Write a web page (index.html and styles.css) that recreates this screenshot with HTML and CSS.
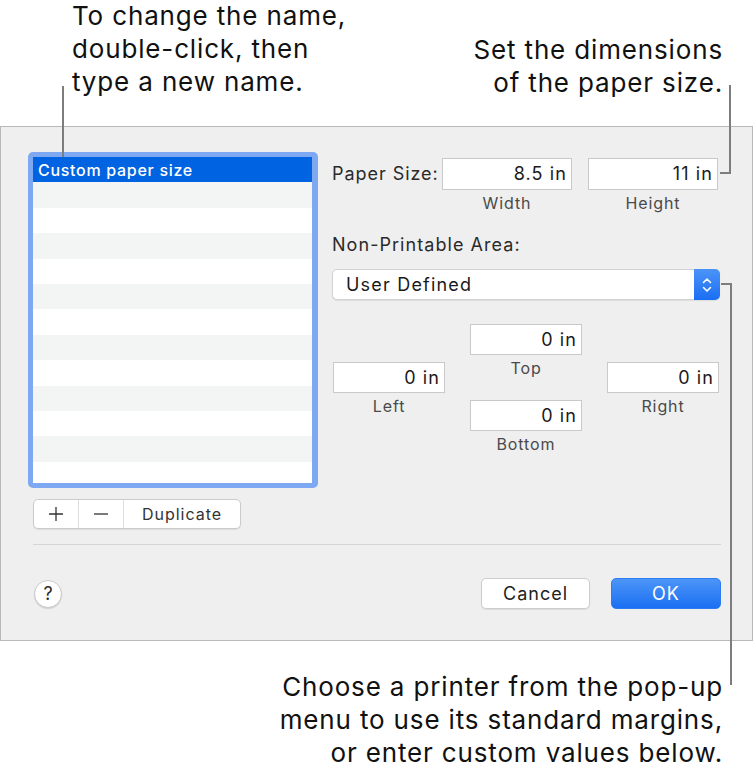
FILE: index.html
```html
<!DOCTYPE html>
<html lang="en">
<head>
    <meta charset="UTF-8">
    <title>Page Setup - Custom Paper Size</title>
    <link rel="stylesheet" href="styles.css">
</head>
<body>
<div class="page">

    <!-- top annotations -->
    <div class="notes-top">
        <p class="note note-left">To change the name,<br>double-click, then<br>type a new name.</p>
        <p class="note note-right">Set the dimensions<br>of the paper size.</p>
    </div>

    <div class="dialog">
        <div class="dialog-body">
            <!-- paper size list -->
            <div class="list-col">
                <div class="list-ring">
                    <div class="size-list">
                        <div class="row selected">Custom paper size</div>
                        <div class="row"></div>
                        <div class="row"></div>
                        <div class="row"></div>
                        <div class="row"></div>
                        <div class="row"></div>
                        <div class="row"></div>
                        <div class="row"></div>
                        <div class="row"></div>
                        <div class="row"></div>
                        <div class="row"></div>
                        <div class="row"></div>
                        <div class="row"></div>
                    </div>
                </div>
                <div class="seg">
                    <span class="seg-btn seg-icon">
                        <svg width="18" height="18" viewBox="0 0 18 18"><path d="M9 2v14M2 9h14" stroke="#333" stroke-width="1.3" fill="none"/></svg>
                    </span>
                    <span class="seg-btn seg-icon">
                        <svg width="18" height="18" viewBox="0 0 18 18"><path d="M2 9h14" stroke="#333" stroke-width="1.3" fill="none"/></svg>
                    </span>
                    <span class="seg-btn seg-text">Duplicate</span>
                </div>
            </div>

            <!-- settings -->
            <div class="settings-col">
                <div class="paper-row">
                    <span class="label">Paper Size:</span>
                    <div class="field-group wide">
                        <div class="field">8.5 in</div>
                        <div class="caption">Width</div>
                    </div>
                    <div class="field-group wide">
                        <div class="field">11 in</div>
                        <div class="caption">Height</div>
                    </div>
                </div>

                <div class="label npa-label">Non-Printable Area:</div>

                <div class="popup">
                    <span class="popup-text">User Defined</span>
                    <span class="popup-arrows">
                        <svg width="12" height="18" viewBox="0 0 12 18"><path d="M2.5 6.5L6 3l3.5 3.5M2.5 11.5L6 15l3.5-3.5" stroke="#fff" stroke-width="1.6" fill="none" stroke-linecap="round" stroke-linejoin="round"/></svg>
                    </span>
                </div>

                <div class="margins">
                    <div class="field-group m-top">
                        <div class="field">0 in</div>
                        <div class="caption">Top</div>
                    </div>
                    <div class="field-group m-left">
                        <div class="field">0 in</div>
                        <div class="caption">Left</div>
                    </div>
                    <div class="field-group m-right">
                        <div class="field">0 in</div>
                        <div class="caption">Right</div>
                    </div>
                    <div class="field-group m-bottom">
                        <div class="field">0 in</div>
                        <div class="caption">Bottom</div>
                    </div>
                </div>
            </div>
        </div>

        <div class="sep"></div>

        <div class="dialog-footer">
            <span class="help">?</span>
            <span class="btn cancel">Cancel</span>
            <span class="btn ok">OK</span>
        </div>
    </div>

    <p class="note note-bottom">Choose a printer from the pop-up<br>menu to use its standard margins,<br>or enter custom values below.</p>

    <!-- leader lines -->
    <div class="leader lead-name"></div>
    <div class="leader lead-size-v"></div>
    <div class="leader lead-size-h"></div>
    <div class="leader lead-popup-h"></div>
    <div class="leader lead-popup-v"></div>
</div>
</body>
</html>
```

FILE: styles.css
```css
body {
    margin: 0;
    background: #fff;
    font-family: Inter, Roboto, "Liberation Sans", sans-serif;
    color: #1d1d1d;
}

.page {
    position: relative;
    width: 753px;
    height: 774px;
    overflow: hidden;
}

/* annotations */
.notes-top {
    display: flex;
    justify-content: space-between;
    height: 126px;
}

.note {
    margin: 0;
    font-size: 26px;
    line-height: 33px;
    letter-spacing: 0.85px;
    color: #111;
}

.note-left {
    margin-left: 72px;
    margin-top: -1px;
}

.note-right {
    margin-top: 33px;
    margin-right: 30px;
    text-align: right;
}

.note-bottom {
    margin-top: 29px;
    margin-right: 30px;
    text-align: right;
}

/* dialog */
.dialog {
    box-sizing: border-box;
    width: 753px;
    border: 1px solid #b9b9b9;
    background: #efefef;
    padding: 25px 31px 31px 27px;
    letter-spacing: 1px;
}

.dialog-body {
    display: flex;
    gap: 14px;
}

.list-col {
    width: 290px;
}

.list-ring {
    box-sizing: border-box;
    height: 336px;
    padding: 5px 6px 5px 5px;
    background: #7fa8f2;
    border-radius: 5px;
}

.size-list {
    height: 326px;
    overflow: hidden;
    background: #fff;
}

.row {
    height: 25.4px;
    box-sizing: border-box;
    padding-left: 5px;
    font-size: 16px;
    line-height: 27px;
    letter-spacing: 0.7px;
}

.row:nth-child(even) {
    background: #f3f4f4;
}

.row.selected {
    background: #0063e1;
    color: #fff;
    font-weight: 500;
}

.seg {
    display: flex;
    width: 208px;
    height: 30px;
    margin: 11px 0 0 5px;
    box-sizing: border-box;
    border: 1px solid #cbcbcb;
    border-radius: 5px;
    background: #fff;
    box-shadow: 0 1px 1px rgba(0, 0, 0, 0.08);
}

.seg-btn {
    display: flex;
    align-items: center;
    justify-content: center;
    border-left: 1px solid #dedede;
}

.seg-btn:first-child {
    border-left: none;
}

.seg-icon {
    width: 44px;
}

.seg-text {
    flex: 1;
    font-size: 16px;
    color: #333;
}

/* right side */
.settings-col {
    width: 388px;
}

.label {
    font-size: 18px;
    letter-spacing: 0.95px;
    color: #2a2a2a;
}

.paper-row {
    display: flex;
    margin-top: 6px;
}

.paper-row .label {
    width: 110px;
    line-height: 32px;
}

.paper-row .field-group + .field-group {
    margin-left: 16px;
}

.field-group.wide {
    width: 130px;
}

.field {
    box-sizing: border-box;
    height: 32px;
    padding-right: 4px;
    border: 1px solid #c9c9c9;
    background: #fff;
    text-align: right;
    font-size: 18px;
    line-height: 30px;
    letter-spacing: 1.1px;
    color: #1a1a1a;
}

.caption {
    margin-top: 3px;
    text-align: center;
    font-size: 16px;
    line-height: 20px;
    letter-spacing: 0.9px;
    color: #4a4a4a;
}

.npa-label {
    margin-top: 21px;
    line-height: 22px;
    letter-spacing: 1.05px;
}

.popup {
    display: flex;
    height: 31px;
    margin-top: 13px;
    box-sizing: border-box;
    border: 1px solid #d2d2d2;
    border-radius: 5px;
    background: #fff;
    box-shadow: 0 1px 1px rgba(0, 0, 0, 0.08);
}

.popup-text {
    flex: 1;
    padding-left: 13px;
    font-size: 18px;
    line-height: 29px;
    letter-spacing: 1.2px;
    color: #1a1a1a;
}

.popup-arrows {
    display: flex;
    align-items: center;
    justify-content: center;
    width: 26px;
    margin: -1px -1px -1px 0;
    border-radius: 0 5px 5px 0;
    background: linear-gradient(#4b94f8, #1a6ef2);
}

.margins {
    display: grid;
    grid-template-columns: repeat(3, 112px);
    grid-template-rows: repeat(4, 38px);
    column-gap: 25px;
    margin-top: 24px;
    margin-left: 1px;
}

.margins .field {
    height: 31px;
    line-height: 29px;
}

.m-top { grid-column: 2; grid-row: 1 / 3; }
.m-left { grid-column: 1; grid-row: 2 / 4; }
.m-right { grid-column: 3; grid-row: 2 / 4; }
.m-bottom { grid-column: 2; grid-row: 3 / 5; }

/* footer */
.sep {
    height: 1px;
    margin: 15px 0 0 5px;
    background: #d6d6d6;
}

.dialog-footer {
    display: flex;
    align-items: center;
    height: 31px;
    margin-top: 33px;
    padding-left: 6px;
}

.help {
    box-sizing: border-box;
    width: 28px;
    height: 28px;
    border: 1px solid #cacaca;
    border-radius: 50%;
    background: #fff;
    box-shadow: 0 1px 1px rgba(0, 0, 0, 0.12);
    text-align: center;
    font-size: 18px;
    line-height: 26px;
    letter-spacing: 0;
    color: #2a2a2a;
    margin-right: auto;
}

.btn {
    box-sizing: border-box;
    height: 31px;
    border-radius: 5px;
    text-align: center;
    font-size: 18px;
    line-height: 29px;
}

.cancel {
    width: 109px;
    border: 1px solid #cdcdcd;
    background: #fff;
    color: #222;
    box-shadow: 0 1px 1px rgba(0, 0, 0, 0.08);
}

.ok {
    width: 110px;
    margin-left: 21px;
    border: 1px solid #2c7cf4;
    background: linear-gradient(#4c95f8, #1b6ff2);
    color: #fff;
}

/* leader lines drawn over the picture */
.leader {
    position: absolute;
    background: #7d7d7d;
}

.lead-name { left: 62px; top: 86px; width: 2px; height: 71px; }
.lead-size-v { left: 729px; top: 85px; width: 2px; height: 89px; }
.lead-size-h { left: 720px; top: 172px; width: 11px; height: 2px; }
.lead-popup-h { left: 721px; top: 283px; width: 11px; height: 2px; }
.lead-popup-v { left: 730px; top: 283px; width: 2px; height: 402px; }
```
